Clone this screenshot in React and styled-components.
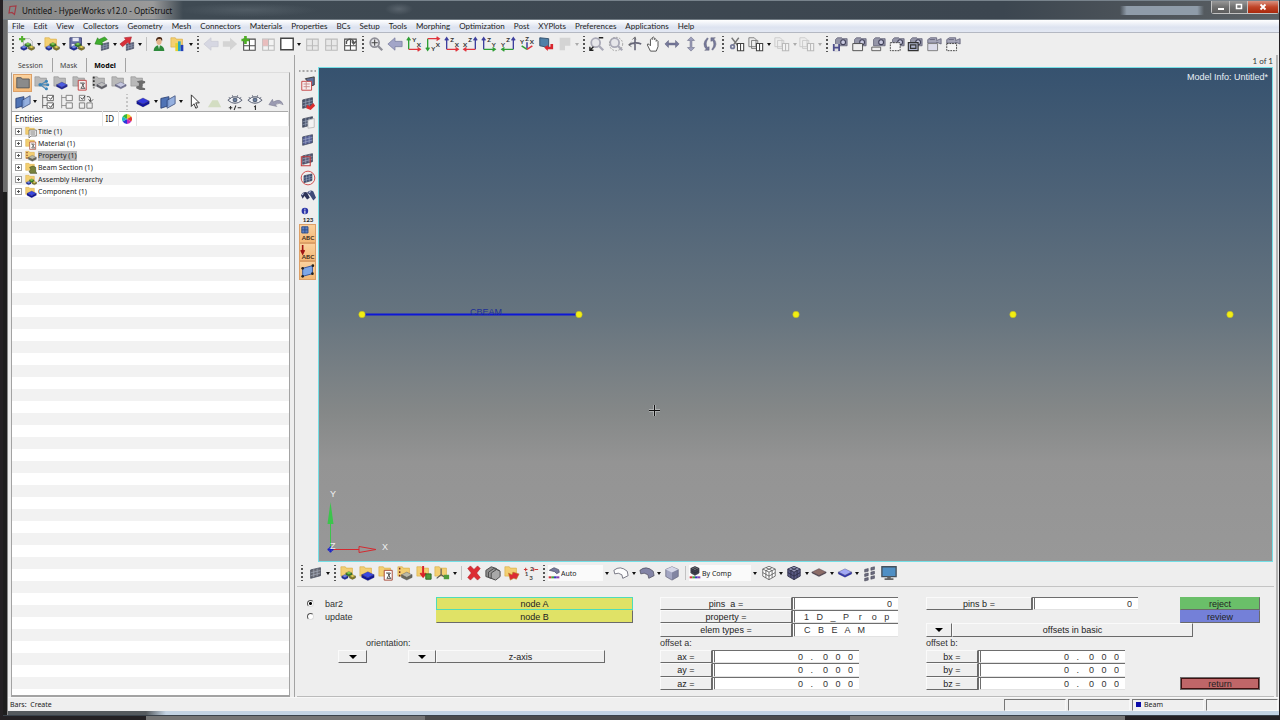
import styled, { createGlobalStyle, css } from 'styled-components';

const GlobalStyle = createGlobalStyle`
    :root {
        --ui: Lato, "Noto Sans", sans-serif;
        --ui-small: "Noto Sans", "Open Sans", sans-serif;
        --panel: "Liberation Sans", Arial, sans-serif;
        --face: #eeeeee;
        --line: #a3a3a3;
        --shadow: #6e6e6e;
        --text-xs: 7px;
        --text-sm: 8px;
        --text-md: 9px;
    }

    * {
        box-sizing: border-box;
    }

    body {
        margin: 0;
        font-family: var(--ui);
        font-size: var(--text-sm);
        color: #222;
    }

    button, input, select {
        margin: 0;
        padding: 0;
        border: 0;
        font: inherit;
        color: inherit;
        background: none;
    }
`;

const Desktop = styled.div`
    height: 100vh;
    display: flex;
    flex-direction: column;
    padding: 0 1px 4px 3px;
    background: linear-gradient(90deg, #242124 0 146px, #757575 146px 425px, #4b4b4b 425px 850px, #757575 850px 1125px, #242124 1125px);
`;

const Frame = styled.div`
    flex: 1;
    min-height: 0;
    display: flex;
    flex-direction: column;
    padding: 0 0 4px 5px;
    border-bottom: 1px solid #39424b;
    background:
        linear-gradient(#8a8a8a, #8a8a8a) 4px 0 / 1px 100% no-repeat,
        linear-gradient(#6e6e6e 0 192px, #1e1e1e 192px) 0 0 / 4px 100% no-repeat,
        linear-gradient(90deg, #555a5e 0 143px, #c3d3e3 163px);
`;

const TitleBar = styled.header`
    display: flex;
    align-items: center;
    height: 20px;
    margin-left: -5px;
    padding-left: 5px;
    border-top: 1px solid #78838c;
    border-bottom: 1px solid #707a82;
    background:
        linear-gradient(90deg, transparent, #8f9ca9 8%, #8f9ca9 92%, transparent) 1117px 5px / 84px 9px no-repeat,
        radial-gradient(ellipse 14px 6px at 396px 8px, #59636c, transparent),
        radial-gradient(ellipse 70px 7px at 245px 9px, #515c65, transparent),
        linear-gradient(90deg, #858585 0, #9a9a9a 150px, #3f4a53 180px, #3c4650 1000px, #4d545a 1140px, #5c6165);
`;

const AppTitle = styled.h1`
    flex: 1;
    display: flex;
    align-items: center;
    gap: 5px;
    margin: 0;
    font-family: var(--ui-small);
    font-size: var(--text-sm);
    font-weight: 400;
    color: #111;
`;

const WindowButtons = styled.div`
    display: flex;
    align-self: flex-start;
    height: 13px;
    border: 1px solid #c2c2c2;
    border-top: 0;
    border-radius: 0 0 3px 3px;
`;

const WindowButton = styled.button`
    display: grid;
    place-items: center;
    width: ${p => p.$close ? '30px' : '18px'};
    border-right: ${p => p.$close ? '0' : '1px solid #c2c2c2'};
    background: ${p => p.$close
        ? 'linear-gradient(#d9917f, #c04428 50%, #a8280c)'
        : 'linear-gradient(#999, #707070 50%, #5d5d5d)'};
`;

const MenuBar = styled.nav`
    display: flex;
    align-items: center;
    gap: 9px;
    height: 13px;
    padding-left: 4px;
    border-bottom: 1px solid #b4b8c2;
    background: linear-gradient(#fff, #dde3f0 60%, #e3e8f3);
`;

const MenuItem = styled.button`
    white-space: nowrap;
`;

const Toolbar = styled.div`
    display: flex;
    align-items: center;
    height: 22px;
    padding-left: 1px;
    background: var(--face);
`;

/* Buttons share the width of their group, the drop arrows stay narrow. */
const ToolGroup = styled.div`
    display: flex;
    align-items: center;
    width: ${p => p.$width}px;
    height: 18px;
`;

const Grip = styled.span`
    flex: none;
    width: 8px;
    height: 16px;
    background: radial-gradient(circle, #222 1px, transparent 1px) center / 8px 4px;
    opacity: ${p => p.$faint ? 0.2 : 0.75};
`;

const SpacedGrip = styled(Grip)`
    margin: 0 2px 0 28px;
`;

const Divider = styled.span`
    flex: none;
    width: 1px;
    height: 14px;
    margin: 0 3px;
    background: #c2c2c2;
`;

const Tool = styled.button`
    flex: 1;
    min-width: 0;
    height: 18px;
    display: grid;
    place-items: center;
    opacity: ${p => p.$dim ? 0.3 : 1};
    ${p => p.$active && css`
        box-shadow: inset 0 0 0 1px #dda067;
        background: linear-gradient(#fbd3a0, #f4b774);
    `}

    svg {
        width: 16px;
        height: 16px;
        display: block;
        overflow: visible;
    }
`;

const DropButton = styled.button`
    flex: none;
    width: 6px;
    height: 16px;
    display: grid;
    place-items: center;
    opacity: ${p => p.$dim ? 0.3 : 1};

    &::after {
        content: "";
        border: 2px solid transparent;
        border-top: 3px solid #111;
        border-bottom: 0;
    }
`;

const Body = styled.div`
    flex: 1;
    min-height: 0;
    display: flex;
    background: var(--face);
`;

const Sidebar = styled.aside`
    flex: none;
    width: 287px;
    display: flex;
    flex-direction: column;
    padding: 0 4px 0 3px;
    border-right: 1px solid var(--line);
    font-family: var(--ui-small);
    font-size: var(--text-xs);
`;

const Tabs = styled.div`
    display: flex;
    align-items: flex-end;
    height: 17px;
`;

const Tab = styled.button`
    height: 14px;
    padding: 0 9px 0 7px;
    border-right: 1px solid var(--line);
    font-weight: ${p => p.$active ? 700 : 400};
    color: ${p => p.$active ? '#000' : '#444'};
`;

const SidePanel = styled.div`
    flex: 1;
    min-height: 0;
    display: flex;
    flex-direction: column;
    border: 1px solid var(--line);
    border-top-color: #ddd;
    border-bottom-width: 2px;
`;

const SideTools = styled.div`
    display: flex;
    align-items: center;
    height: 19px;
    padding-left: 1px;
`;

const EntityList = styled.div`
    flex: 1;
    overflow: hidden;
    background: repeating-linear-gradient(#f2f2f2 0 12px, #fff 12px 24px) 0 14px;
`;

const EntityTable = styled.table`
    width: 100%;
    table-layout: fixed;
    border-collapse: collapse;

    th, td {
        padding: 0;
        text-align: left;
        font-weight: 400;
        vertical-align: middle;
    }

    th {
        height: 14px;
        padding-left: 3px;
        border-right: 1px solid #e4e4e4;
        border-top: 1px solid #aaa;
        background: #fff;
        font-family: var(--ui-small);
        font-size: var(--text-sm);
    }

    th svg {
        display: block;
    }

    td {
        height: 12px;
    }
`;

const Entity = styled.div`
    display: flex;
    align-items: center;
    height: 12px;
    padding-left: 3px;
    white-space: nowrap;

    svg {
        width: 12px;
        height: 12px;
        margin: 0 1px 0 3px;
    }
`;

const Expander = styled.button`
    width: 7px;
    height: 7px;
    border: 1px solid #999;
    background: linear-gradient(#555, #555) center / 3px 1px no-repeat, linear-gradient(#555, #555) center / 1px 3px no-repeat, #fff;
`;

const EntityName = styled.span`
    line-height: 10px;
    background: ${p => p.$selected ? '#b9b9b9' : 'transparent'};
`;

const Main = styled.main`
    flex: 1;
    min-width: 0;
    display: flex;
    flex-direction: column;
    padding: 0 2px 0 2px;
    margin-right: 1px;
    border-right: 2px solid #b5b5b5;
`;

const Stage = styled.div`
    flex: 1;
    min-height: 0;
    display: flex;
    padding-right: 1px;
`;

const SideRail = styled.div`
    flex: none;
    width: 21px;
    padding: 12px 2px 0 2px;
`;

const RailGrip = styled.div`
    height: 8px;
    background: radial-gradient(circle, #222 1px, transparent 1px) center / 4px 7px;
    opacity: 0.7;
`;

const Rail = styled.div`
    height: 205px;
    display: flex;
    flex-direction: column;

    ${Tool} {
        width: 17px;
        height: auto;
        min-height: 0;
    }
`;

const Page = styled.div`
    flex: 1;
    min-width: 0;
    display: flex;
    flex-direction: column;
`;

const PageCount = styled.div`
    height: 12px;
    line-height: 13px;
    text-align: right;
    color: #333;
`;

const Viewport = styled.div`
    flex: 1;
    min-height: 0;
    position: relative;
    border: 1px solid #74dfe6;
    background: linear-gradient(#36526f, #4d6277 25%, #66747f 50%, #858888 70%, #949494 80%, #989898);

    svg {
        display: block;
        width: 100%;
        height: 100%;
    }
`;

const ModelInfo = styled.div`
    position: absolute;
    top: 4px;
    right: 4px;
    font-family: var(--panel);
    font-size: var(--text-md);
    color: #e8f0f6;
`;

const Combo = styled.select`
    appearance: none;
    height: 16px;
    width: ${p => p.$width}px;
    padding-left: 1px;
    background: #fafafa;
    font-family: var(--ui-small);
    font-size: var(--text-xs);
`;

const ComboIcon = styled.span`
    display: grid;
    width: 12px;
    height: 16px;
    place-items: center;
    background: #fafafa;

    svg {
        width: 12px;
        height: 14px;
    }
`;

const ComboArrow = styled(DropButton)`
    width: 8px;
`;

const CommandPanel = styled.form`
    display: grid;
    grid-template-columns: 362fr 266fr 254fr 80px;
    margin-top: 2px;
    padding: 10px 14px 6px 1px;
    border-top: 1px solid #c4c4c4;
    border-bottom: 1px solid #bbb;
    font-family: var(--panel);
    font-size: var(--text-md);
    color: #333;
`;

const Column = styled.div`
    display: grid;
    grid-template-rows: repeat(2, 13px 13px 14px) 13px;
`;

const Line = styled.div`
    display: flex;
    align-items: stretch;
    min-width: 0;
    grid-row: ${p => p.$row};
    padding-left: ${p => p.$indent || 0}px;
    line-height: 12px;
`;

const Bevel = styled.button`
    flex: none;
    width: ${p => p.$width}px;
    border: 1px solid;
    border-color: ${p => p.$focus ? '#4fdcb8' : `${p.$tone || '#fafafa'} #6a6a6a #6a6a6a ${p.$tone || '#fafafa'}`};
    background: ${p => p.$tone || '#efefef'};
    line-height: 10px;
    color: #222;
    ${p => p.$default && css`
        border-color: #6a6a6a;
        box-shadow: inset 0 0 0 1px #401010;
    `}
`;

const ArrowBevel = styled(Bevel)`
    display: grid;
    place-items: center;

    &::after {
        content: "";
        border: 4px solid transparent;
        border-top-color: #000;
        border-bottom: 0;
    }
`;

const Field = styled.input`
    flex: none;
    width: ${p => p.$width}px;
    padding: ${p => p.$text ? '0 0 0 9px' : '0 6px 0 0'};
    border-left: 3px double var(--shadow);
    border-top: 1px solid var(--shadow);
    border-bottom: 1px solid #e2e2e2;
    background: #fff;
    text-align: ${p => p.$text ? 'left' : 'right'};
    color: #333;
`;

const Choice = styled.label`
    flex: none;
    width: 129px;
    display: flex;
    align-items: center;
    gap: 11px;
`;

const Radio = styled.input`
    appearance: none;
    width: 7px;
    height: 7px;
    border: 1px solid;
    border-color: #555 #ddd #ddd #555;
    border-radius: 50%;
    background: #fff;

    &:checked {
        background: radial-gradient(circle, #000 1px, #fff 2px);
    }
`;

const Spacer = styled.span`
    width: 41px;
`;

const StatusBar = styled.footer`
    display: flex;
    align-items: center;
    gap: 2px;
    height: 14px;
    padding: 0 1px 0 2px;
    background: #efefef;
    border-top: 1px solid #f8f8f8;
    font-family: var(--ui-small);
    font-size: var(--text-xs);
`;

const StatusText = styled.span`
    flex: 1;
`;

const StatusCell = styled.span`
    display: flex;
    align-items: center;
    gap: 3px;
    width: ${p => p.$width}px;
    height: 12px;
    padding-left: 3px;
    border: 1px solid;
    border-color: #777 #f8f8f8 #f8f8f8 #777;
`;

const Swatch = styled.i`
    width: 5px;
    height: 5px;
    background: #0a0aa8;
`;

/* ---- icon parts, drawn on an 18 x 18 field ---- */

const Box = ({ x = 9, y = 12, w = 5, top = '#4d5be0', side = '#1a1f9c', h = 3 }) => (
    <g stroke="#1c1c3a" strokeWidth=".3">
        <path d={`M${x - w} ${y}l${w} ${-w / 2}l${w} ${w / 2}l${-w} ${w / 2}z`} fill={top} />
        <path d={`M${x - w} ${y}v${h}l${w} ${w / 2}l${w} ${-w / 2}v${-h}l${-w} ${w / 2}z`} fill={side} />
    </g>
);

const Folder = ({ grey }) => (
    <path d="M1 2h5l1 1.500h7v9H1z" fill={grey ? '#b9b9b9' : '#f3cf72'} stroke={grey ? '#929292' : '#d9ab42'} strokeWidth=".7" />
);

const Blocks = () => (
    <>
        <Box x={10} y={9} w={3.500} h={2} top="#7fd44c" side="#2f8c1d" />
        <Box x={5.500} y={12.500} w={3.500} h={2} top="#6d84f0" side="#1c2ea8" />
        <Box x={14} y={12.500} w={3.500} h={2} top="#e0cf4e" side="#8a7f1c" />
    </>
);

const Sheet = ({ fill = '#fff' }) => (
    <path d="M3 3.500h13v12.500H3zM9.500 3.500v12.500M3 11h13" fill={fill} stroke="#4a4a4a" strokeWidth="1.200" />
);

const Panel = ({ fill = '#6f7f9c' }) => (
    <>
        <path d="M3 5.500l11-2.500v9l-11 3z" fill={fill} stroke="#333a4c" strokeWidth=".8" />
        <path d="M6.500 4.700v9.300M10.300 4v9M3 8.800l11-2.700M3 12l11-2.900" stroke="#c4cede" strokeWidth=".5" fill="none" />
    </>
);

const Camera = () => (
    <>
        <path d="M4 4l2-2h5l1 1h5v8H4z" fill="#9596a8" stroke="#56566c" strokeWidth=".8" />
        <circle cx="12.500" cy="7" r="2.700" fill="#c9cae0" stroke="#404058" strokeWidth="1.200" />
    </>
);

const MovieCamera = () => (
    <path d="M2 8V4l3-2h7v3l5-2v6l-5-2v1zM4 4h6" fill="#a6a6b8" stroke="#5d5d74" strokeWidth=".9" />
);

const Mesh3d = ({ top, side, line }) => (
    <>
        <path d="M9 1.500l7 3v8l-7 4-7-4v-8z" fill={side} />
        <path d="M9 1.500l7 3-7 3.500-7-3.500z" fill={top} />
        <path d="M9 1.500l7 3v8l-7 4-7-4v-8zM2 4.500l7 3.500 7-3.500M9 8v8.500M2 8.500l7 4 7-4M5.500 3l7 3.300v8.200M12.500 3l-7 3.300v8.200" fill="none" stroke={line} strokeWidth=".9" />
    </>
);

const Cube = ({ colour = '#a3a6c2' }) => (
    <>
        <path d="M9 2l7 3v8l-7 4-7-4V5z" fill={colour} stroke="#55556e" strokeWidth=".7" />
        <path d="M9 2l7 3-7 3.500L2 5z" fill="#d5d7e8" />
        <path d="M9 8.500V17l7-4V5z" fill="#6d6f8c" opacity=".6" />
    </>
);

/* One corner view: two axes from the same origin, each with its letter. */
const Axes = ({ up, across, upColour, acrossColour, right, down }) => {
    const x = right ? 15 : 3;
    const y = down ? 3 : 15;
    const ex = right ? 2 : 16;
    const ey = down ? 16 : 2;
    const sx = right ? 1 : -1;
    const sy = down ? -1 : 1;
    return (
        <>
            <path d={`M${x} ${y}V${ey}m-2 ${3 * sy}L${x} ${ey}l2 ${3 * sy}`} fill="none" stroke={upColour} strokeWidth="1.500" />
            <path d={`M${x} ${y}H${ex}m${3 * sx} -2L${ex} ${y}l${3 * sx} 2`} fill="none" stroke={acrossColour} strokeWidth="1.500" />
            <text x="7" y={down ? 17 : 7} fontSize="7" fontWeight="700" fill="#333">{up}</text>
            <text x={right ? 1 : 12} y="12" fontSize="7" fontWeight="700" fill="#333">{across}</text>
        </>
    );
};

const Eye = () => (
    <>
        <path d="M1 7q8-8 16 0q-8 7-16 0M2 4l2 1M6 1.500l1 2M12 1.500l-1 2M16 4l-2 1" fill="#eef0f5" stroke="#5a6073" strokeWidth="1.100" />
        <circle cx="9" cy="6.700" r="2.200" fill="#6a7fa0" stroke="#333c50" strokeWidth=".8" />
    </>
);

const Pin = ({ colour = '#8f8fa2' }) => (
    <path d="M1 6q7-6 15 1l1 5-6 3-1-4q-4-3-8-1z" fill={colour} stroke="#4a4a5c" strokeWidth=".8" />
);

const Lens = ({ colour = '#a9a9b7' }) => (
    <>
        <circle cx="7.500" cy="7.500" r="5" fill="#e6e6ea" stroke={colour} strokeWidth="2" />
        <path d="M11 11l5 5" stroke={colour} strokeWidth="2.600" />
    </>
);

const ColourStrip = () => (
    <>
        <path d="M1 14h4v3H1z" fill="#d4343c" />
        <path d="M5 14h4v3H5z" fill="#3f9e3f" />
        <path d="M9 14h4v3H9z" fill="#3838c0" />
        <path d="M13 14h4v3h-4z" fill="#8b3fb0" />
    </>
);

const red = '#e0343c';
const green = '#2f9e35';
const blue = '#3d3f9e';

const art = {
    newModel: <><path d="M5 3h7l3 3v8H5z" fill="#f0f0f0" stroke="#999" strokeWidth=".7" /><path d="M3.500 0v7M0 3.500h7" stroke="#55b030" strokeWidth="2.300" /><Blocks /></>,
    openModel: <><Folder /><Blocks /></>,
    saveModel: <><path d="M1 2h13v12H1z" fill="#6970a8" stroke="#3a3f70" /><path d="M4 2h7v4H4zM3 9h9v5H3z" fill="#e8e9f4" /><Blocks /></>,
    importData: <><g transform="translate(6 5) scale(.75)"><Panel fill="#59607c" /></g><path d="M12 1l3 3-6 3 1 3-9-1 3-7 1.500 2z" fill="#3fae2e" stroke="#227716" strokeWidth=".6" /></>,
    exportData: <><g transform="translate(6 5) scale(.75)"><Panel fill="#59607c" /></g><path d="M1 9l3 3 6-5 2 2 2-8-8 1 1.500 2z" fill="#d9303a" stroke="#a31c26" strokeWidth=".6" /></>,
    user: <><path d="M3 17q0-6 6-7q6 1 6 7z" fill="#2e8a3c" /><ellipse cx="9" cy="6" rx="3" ry="4" fill="#e3b48d" /><path d="M5.500 6q0-5 4-5q4 0 3 5l-1.500-2.500H8z" fill="#4a2a18" /><path d="M8 10h2l-1 5z" fill="#fff" /></>,
    folderBars: <><Folder /><path d="M6 17V8h3v9z" fill="#e3d22d" /><path d="M9 17V6h3v11z" fill="#28a8c0" /><path d="M12 17v-7h3v7z" fill="#2440b8" /></>,
    back: <path d="M1 9l8-7v4h8v6H9v4z" fill="#a2a5c8" stroke="#777a9c" strokeWidth=".8" />,
    forward: <path d="M17 9L9 2v4H1v6h8v4z" fill="#999" />,
    addPage: <><Sheet /><path d="M5 0v9M.5 4.500h9" stroke="#4dad25" strokeWidth="3" /></>,
    deletePage: <><Sheet /><path d="M3 4h6v7H3z" fill="#e05050" /></>,
    layout: <path d="M2 2.500h14v13H2z" fill="#fff" stroke="#444" strokeWidth="1.600" />,
    sheet: <Sheet fill="#ddd" />,
    pageSwap: <><Sheet /><path d="M5 9V6q4-5 8 0v2M11 6l2 3 3-3" fill="none" stroke="#555" strokeWidth="1.600" /></>,
    fit: <><Lens colour="#8f8f98" /><path d="M7.500 4v7M4 7.500h7" stroke="#444" strokeWidth="1.200" /></>,
    viewXY: <Axes up="Y" across="X" upColour={green} acrossColour={red} />,
    viewXYDown: <Axes up="Y" across="X" upColour={green} acrossColour={red} down />,
    viewZX: <Axes up="Z" across="X" upColour={blue} acrossColour={red} />,
    viewXZ: <Axes up="Z" across="X" upColour={blue} acrossColour={red} right />,
    viewZY: <Axes up="Z" across="Y" upColour={blue} acrossColour={green} />,
    viewYZ: <Axes up="Z" across="Y" upColour={blue} acrossColour={green} right />,
    viewIso: <><path d="M9 14V7" stroke={blue} strokeWidth="1.700" /><path d="M9 15l-6-4" stroke={green} strokeWidth="1.700" /><path d="M9 15l6-4" stroke={red} strokeWidth="1.700" /><g fontSize="7" fontWeight="700" fill="#333"><text x="7" y="6">Z</text><text x="1" y="9">Y</text><text x="12" y="9">X</text></g></>,
    viewBack: <><path d="M2 2l10 1v10l-10-2z" fill="#5080a8" stroke="#2d4a68" /><path d="M7 13l4-3v2h3v-3h3v6h-6v2z" fill="#d8262e" /></>,
    viewSaved: <path d="M3 2h12v9H9v5H3z" fill="#999" />,
    zoom: <><Lens /><path d="M11 2h5M1 16l4-4M1 12v4h4" stroke="#222" strokeWidth="1.500" fill="none" /></>,
    zoomCircle: <><Lens /><circle cx="9" cy="9" r="7.500" fill="none" stroke="#999" strokeDasharray="2 1.500" /></>,
    rotate: <><path d="M9 2v14M2 10q7-4 14-1" fill="none" stroke="#666678" strokeWidth="1.800" /><path d="M6 4l3-3 1 3M5 7l-3 3 3 2" fill="none" stroke="#666" /></>,
    hand: <path d="M5 17L1.500 10q0-2 2-.5l1.500 1.500V4q1-2 2 0V2q1-2 2.300 0v2q1-2 2.200 0v2q1-2 2 0v6l-2 5z" fill="#fff" stroke="#555" strokeWidth="1.100" />,
    panH: <path d="M1 9l4-4v3h8V5l4 4-4 4v-3H5v3z" fill="#777a9c" stroke="#60627c" strokeWidth=".6" />,
    panV: <path d="M9 1l4 4h-3v8h3l-4 4-4-4h3V5H5z" fill="#9ea0bd" stroke="#60627c" strokeWidth=".6" />,
    spin: <path d="M6 2q-7 7-1 13l-2 1h5v-4l-2 1q-3-5 1-10zM12 16q7-7 1-13l2-1h-5v4l2-1q3 5-1 10z" fill="#777a9c" stroke="#55576e" strokeWidth=".5" />,
    cut: <><path d="M3 2l7 9M11 2L5 10" stroke="#777" strokeWidth="1.600" /><circle cx="4" cy="12" r="2" fill="none" stroke="#777b99" strokeWidth="2" /><path d="M9.500 8.500h7v8h-7zM13 9v7" fill="#fff" stroke="#444" strokeWidth="1.200" /></>,
    copy: <><path d="M1 2h6l2 2v8H1zM4 5h7v9H4z" fill="#eee" stroke="#777" /><path d="M9.500 8.500h7v8h-7zM13 9v7" fill="#fff" stroke="#444" strokeWidth="1.200" /></>,
    camSave: <><Camera /><path d="M1 9h8v8H1z" fill="#4e4f8c" /><path d="M3 9h4v3H3zM3 14h4v3H3z" fill="#ddd" /></>,
    camWindow: <><Camera /><path d="M2 8.500h11v8H2z" fill="#eee" stroke="#444" /></>,
    camBar: <><Camera /><path d="M2 12.500h10v4H2z" fill="#eee" stroke="#555" /></>,
    camArea: <><Camera /><path d="M1.500 7.500h11v9h-11z" fill="#f5f5f5" stroke="#333" strokeDasharray="2 1" /></>,
    camPage: <><Camera /><path d="M1.500 7.500h11v9h-11zM4 10h6v4H4z" fill="#aeb4ce" stroke="#333" strokeWidth="1.300" /></>,
    movie: <><MovieCamera /><path d="M2 8.500h11v8H2z" fill="#dcdcea" stroke="#777" /></>,
    movieArea: <><MovieCamera /><path d="M2 8.500h11v8H2z" fill="#f5f5f5" stroke="#333" strokeDasharray="2 1" /></>,

    folderGrey: <path d="M2 3h5l1 1.500h8v10H2z" fill="#8b8b8b" stroke="#575757" />,
    shareGrey: <><Folder grey /><path d="M14 7L7 11l7 5M7 11h9" stroke="#4888b8" strokeWidth="1.200" fill="none" /><g fill="#3a84b8"><circle cx="7" cy="11" r="2" /><circle cx="14" cy="7" r="1.700" /><circle cx="15.500" cy="11" r="1.700" /><circle cx="14" cy="15.500" r="1.700" /></g></>,
    boxGrey: <><Folder grey /><Box x={10} y={11} w={6} h={2} /></>,
    matGrey: <><Folder grey /><path d="M7 6h9v11H7z" fill="#f5eeee" stroke="#c03636" /><path d="M9 9h5l-4 6h5M11 9l3 6" stroke="#555" fill="none" /></>,
    propGrey: <><Folder grey /><path d="M2 2v13" stroke="#333" strokeDasharray="2 2" strokeWidth="2" /><Box x={11} y={11} w={5.500} h={2} top="#bdbdbd" side="#666" /></>,
    meshGrey: <><Folder grey /><Box x={11} y={11} w={6} h={1.500} top="#c5c7df" side="#7c7ea0" /></>,
    beamGrey: <><Folder grey /><path d="M8 7l5-1 4 1v2l-3 1v4l3 1v2h-6l-4-2v-2l3-1v-3l-2-1z" fill="#6c6c6c" /></>,
    planes: <><path d="M1 5l9-2v10l-9 3z" fill="#4f73b5" stroke="#2c4174" /><path d="M8 7l9-5v9l-9 5z" fill="#86a6dd" stroke="#2c4174" opacity=".85" /></>,
    treeOn: <><path d="M3 1v15M3 4h5M3 13h5" stroke="#666" fill="none" /><path d="M8 1.500h7v6H8zM8 10h7v6H8z" fill="#fff" stroke="#555" /><path d="M10 4l2 2 3-4M10 13l2 2 3-4" fill="none" stroke="#333" /></>,
    treeOff: <><path d="M3 1v15M3 4h5M3 13h5" stroke="#888" fill="none" /><path d="M8 1.500h7v6H8zM8 10h7v6H8z" fill="#f4f4f4" stroke="#777" /></>,
    treeSwap: <><path d="M1.500 1.500h6v6h-6zM1.500 10h6v6h-6zM10 10h6v6h-6z" fill="#eee" stroke="#777" /><path d="M3 4l2 2 3-4" stroke="#333" fill="none" /><path d="M10 3q5-1 4 5M12 6l2 3 3-3" stroke="#444" fill="none" /></>,
    block: <Box x={9} y={8} w={7} h={3} top="#3438dd" side="#1114a0" />,
    pointer: <path d="M6 1v13l3-3 2 5 2-1-2-5h4z" fill="#fff" stroke="#222" />,
    ghost: <path d="M1 15l5-8h6l4 8z" fill="#98b85e" />,
    eyePlus: <><Eye /><path d="M2 15.500h4M4 13.500v4M10 13l-2 5M12 15.500h4" stroke="#333" strokeWidth="1.200" /></>,
    eyeOne: <><Eye /><path d="M8 14.500l1.500-1V18" fill="none" stroke="#333" strokeWidth="1.300" /></>,
    undo: <path d="M1 12l4-6 1 3q8-5 11 3q-4-3-9 0l2 2z" fill="#9b9bb2" stroke="#77778c" strokeWidth=".6" />,

    title: <><Folder /><path d="M6 6h11v9H9l-3 3z" fill="#f4f4f4" stroke="#555" /><path d="M8 9h7M8 12h7" stroke="#444" /></>,
    material: <><Folder /><path d="M7 6h9v11H7z" fill="#fff" stroke="#a03b28" /><path d="M9 9h5l-4 6h5M11 9l3 6" stroke="#444" fill="none" /></>,
    property: <><Folder /><path d="M3 3v12" stroke="#7a2a22" strokeDasharray="2 2" strokeWidth="1.600" /><Box x={11} y={11} w={6} h={3} top="#b9b9a6" side="#6b6b5a" /></>,
    beam: <><Folder /><path d="M7 8l5-2 4 2v7l2 2H8l-2-3 3-2z" fill="#78823c" stroke="#4c5426" /></>,
    assembly: <><Folder /><Blocks /></>,
    component: <><Folder /><Box x={10} y={11} w={7} h={3} top="#3b48e0" side="#10149c" /></>,

    railCards: <><path d="M6 3l10-2v9l-3 1z" fill="#5f6f9a" stroke="#333" /><path d="M2 6h11v10H2z" fill="#f7eeee" stroke="#c23b3b" /><path d="M4 9h7M4 12h7M7 6v9" stroke="#c98a8a" /></>,
    railRed: <><Panel fill="#4c566e" /><path d="M8 11l3 2 4-4 2 3-5 5-5-2z" fill="#dc2e2e" /></>,
    railHalf: <><Panel fill="#4c566e" /><path d="M9 7l7-2v10l-7 1z" fill="#f2f2f2" stroke="#bbb" /></>,
    railMesh: <Panel fill="#565f96" />,
    railBox: <><Panel fill="#5c5c78" /><path d="M1.500 6.500h10v10h-10z" fill="none" stroke="#c23b3b" strokeWidth="1.200" /></>,
    railCircle: <><g transform="translate(2 2) scale(.82)"><Panel fill="#3f5278" /></g><circle cx="9" cy="9" r="7.700" fill="none" stroke="#d05050" strokeWidth="1.100" /></>,
    binoculars: <><path d="M1 8q3-5 7-3l3 6-3 2-3-4-2 3z" fill="#2d3358" /><path d="M8 5q4-4 7-1l3 7-3 3-4-6z" fill="#3f4a78" /><path d="M2 8l2-2M10 5l2-1" stroke="#c5cde8" strokeWidth="1.400" /></>,
    info123: <><circle cx="5.500" cy="4.500" r="3.700" fill="#2b35a8" /><path d="M5.500 4V7.500M5.500 2v1" stroke="#fff" strokeWidth="1.200" /><text x="3" y="17" fontSize="7" fontWeight="700" fill="#222">123</text></>,
    abcMesh: <><path d="M2 2h7v7H2zM5.500 2v7M2 5.500h7" fill="#5f80c2" stroke="#2b4a86" /><text x="2" y="17" fontSize="7" fontWeight="700" fill="#3a2a1a">ABC</text></>,
    abcForce: <><path d="M3 1v9M1 7l2 4 2-4" stroke="#a01414" strokeWidth="1.800" fill="none" /><text x="2" y="17" fontSize="7" fontWeight="700" fill="#3a2a1a">ABC</text></>,
    quad: <><path d="M3 6l11-3v9l-11 3z" fill="#7fa8e8" stroke="#2d4f9a" /><g fill="#222"><circle cx="3" cy="6" r="1.500" /><circle cx="14.500" cy="3" r="1.500" /><circle cx="14" cy="12" r="1.500" /><circle cx="3" cy="15" r="1.500" /></g></>,

    meshDark: <Panel fill="#6b6d76" />,
    load: <><Folder /><path d="M8 1v11M5 9l3 4 3-4" stroke="#d8222a" strokeWidth="2.200" fill="none" /><path d="M11 10h6v6h-6z" fill="#4f9b3d" stroke="#2c6420" /></>,
    system: <><Folder /><path d="M8 4v7l-5 4M8 11l6 4" stroke="#555" strokeWidth="1.300" fill="none" /><path d="M11 11h6v5h-6z" fill="#4f9b3d" /></>,
    remove: <path d="M2 4l3-3 4 4 4-4 3 3-4 5 4 5-3 3-4-4-4 4-3-3 4-5z" fill="#dc2c34" stroke="#a81820" strokeWidth=".6" />,
    cards: <><path d="M1 6l6-4 6 2v6l-6 5-6-2z" fill="#8c8c8c" stroke="#444" /><path d="M4 8l6-4 6 2v6l-5 4-7-2z" fill="#9a9a9a" stroke="#444" /><path d="M7 9l6-4 4 2v6l-5 4-5-2z" fill="#a9a9a9" stroke="#444" /></>,
    organize: <><Folder /><path d="M5 9l4 2 1-3 7 2-3 6-3-1-4 2z" fill="#dc2c34" stroke="#b38b20" strokeWidth=".6" /></>,
    renumber: <><g fontSize="7" fontWeight="700" fill="#444"><text x="8" y="7">2</text><text x="7" y="17">3</text><text x="2" y="12">1</text></g><path d="M1 5h4M3 3v4M13 5h4M12 3v4" stroke="#cc3a3a" strokeWidth="1.200" /></>,
    topoAuto: <><path d="M2 5l7-4 7 3 1 4-4 2-3-3z" fill="#777a9c" stroke="#44465c" /><ColourStrip /></>,
    surfaceWire: <Pin colour="#fdfdfd" />,
    surfaceShade: <Pin colour="#8384a6" />,
    cube: <Cube />,
    compColour: <><g transform="translate(1 -2) scale(.88)"><Mesh3d top="#77777f" side="#47475a" line="#26262e" /></g><ColourStrip /></>,
    wireCube: <Mesh3d top="#fff" side="#fff" line="#555" />,
    solidCube: <Mesh3d top="#9c9cbd" side="#5b5b85" line="#2b2b42" />,
    plateBrown: <Box x={9} y={8} w={8} h={1} top="#8d6d68" side="#5b4542" />,
    plateBlue: <Box x={9} y={8} w={7.500} h={2} top="#a2a8f4" side="#3438b8" />,
    shrink: <g fill="#6c6c80" stroke="#3c3c4c" strokeWidth=".6"><path d="M3 5l4-1v3l-4 1zM10 3l4-1v3l-4 1zM3 10l4-1v3l-4 1zM10 8l4-1v3l-4 1zM3 15l4-1v3l-4 1zM10 13l4-1v3l-4 1z" /></g>,
    monitor: <><path d="M1 2h16v11H1z" fill="#4f8fc4" stroke="#44505c" strokeWidth="1.500" /><path d="M7 13h4v2h3v2H4v-2h3z" fill="#666" /></>,
};

const Icon = ({ name }) => <svg viewBox="0 0 18 18" aria-hidden="true">{art[name]}</svg>;

/* Tools are listed as strings: "+" adds a drop arrow, "~" greys it out, "*" marks it pressed, "|" is a divider. */
const renderTools = items => items.map((item, i) => {
    if (item === '|') return <Divider key={i} />;
    const dim = item.startsWith('~');
    const name = item.replace(/[~+*]/g, '');
    const tool = <Tool key={i} type="button" aria-label={name} $dim={dim} $active={item.includes('*')}><Icon name={name} /></Tool>;
    return item.endsWith('+') ? [tool, <DropButton key={`${i}-drop`} type="button" aria-label={`${name} options`} $dim={dim} />] : tool;
});

const menus = ['File', 'Edit', 'View', 'Collectors', 'Geometry', 'Mesh', 'Connectors', 'Materials', 'Properties', 'BCs', 'Setup', 'Tools', 'Morphing', 'Optimization', 'Post', 'XYPlots', 'Preferences', 'Applications', 'Help'];

const toolGroups = [
    { width: 185, items: ['newModel+', 'openModel+', 'saveModel+', 'importData+', 'exportData+', '|', 'user', 'folderBars+'] },
    { width: 165, items: ['~back', '~forward', 'addPage', '~deletePage', 'layout+', '~sheet', '~sheet', 'pageSwap'] },
    { width: 221, items: ['fit', 'back', 'viewXY', 'viewXYDown', 'viewZX', 'viewXZ', 'viewZY', 'viewYZ', 'viewIso', 'viewBack', '~viewSaved+'] },
    { width: 139, items: ['zoom', 'zoomCircle', 'rotate', 'hand', 'panH', 'panV', 'spin'] },
    { width: 104, items: ['cut', 'copy+', '~copy+', '~copy+'] },
    { width: 139, items: ['camSave', 'camWindow', 'camBar', 'camArea', 'camPage', 'movie', 'movieArea'] },
];

const railTools = ['railCards', 'railRed', 'railHalf', 'railMesh', 'railBox', 'railCircle', 'binoculars', 'info123', '*abcMesh', '*abcForce', '*quad'];

const entities = [
    { icon: 'title', name: 'Title (1)' },
    { icon: 'material', name: 'Material (1)' },
    { icon: 'property', name: 'Property (1)', selected: true },
    { icon: 'beam', name: 'Beam Section (1)' },
    { icon: 'assembly', name: 'Assembly Hierarchy' },
    { icon: 'component', name: 'Component (1)' },
];

const nodes = [43, 260, 477, 694, 911];

function Browser() {
    return (
        <Sidebar>
            <Tabs role="tablist">
                <Tab role="tab">Session</Tab>
                <Tab role="tab">Mask</Tab>
                <Tab role="tab" aria-selected="true" $active>Model</Tab>
            </Tabs>
            <SidePanel>
                <SideTools>
                    <ToolGroup $width={135}>
                        {renderTools(['*folderGrey', 'shareGrey', 'boxGrey', 'matGrey', 'propGrey', 'meshGrey', 'beamGrey'])}
                    </ToolGroup>
                </SideTools>
                <SideTools>
                    <ToolGroup $width={82}>{renderTools(['planes+', 'treeOn', 'treeOff', 'treeSwap'])}</ToolGroup>
                    <SpacedGrip $faint />
                    <ToolGroup $width={51}>{renderTools(['block+', 'planes+'])}</ToolGroup>
                    <ToolGroup $width={102}>{renderTools(['pointer', '~ghost', 'eyePlus', 'eyeOne', 'undo'])}</ToolGroup>
                </SideTools>
                <EntityList>
                    <EntityTable>
                        <colgroup>
                            <col width="90" />
                            <col width="16" />
                            <col width="18" />
                            <col />
                        </colgroup>
                        <thead>
                            <tr>
                                <th>Entities</th>
                                <th>ID</th>
                                <th aria-label="Color">
                                    <svg width="10" height="10" viewBox="0 0 10 10">
                                        <path d="M5 5V0a5 5 0 0 1 4.300 2.500z" fill="#e8d42c" />
                                        <path d="M5 5l4.300-2.500a5 5 0 0 1 0 5z" fill="#e23a30" />
                                        <path d="M5 5l4.300 2.500A5 5 0 0 1 5 10z" fill="#c22cc2" />
                                        <path d="M5 5v5A5 5 0 0 1 .7 7.500z" fill="#2c36d8" />
                                        <path d="M5 5L.7 7.500a5 5 0 0 1 0-5z" fill="#22b8c8" />
                                        <path d="M5 5L.7 2.500A5 5 0 0 1 5 0z" fill="#38b838" />
                                    </svg>
                                </th>
                                <th />
                            </tr>
                        </thead>
                        <tbody>
                            {entities.map(e => (
                                <tr key={e.name}>
                                    <td colSpan="4">
                                        <Entity>
                                            <Expander aria-label={`Expand ${e.name}`} />
                                            <Icon name={e.icon} />
                                            <EntityName $selected={e.selected}>{e.name}</EntityName>
                                        </Entity>
                                    </td>
                                </tr>
                            ))}
                        </tbody>
                    </EntityTable>
                </EntityList>
            </SidePanel>
        </Sidebar>
    );
}

function Scene() {
    return (
        <Viewport>
            <svg viewBox="0 0 953 493" preserveAspectRatio="none">
                <path d="M43 246.500h217" stroke="#0d17d6" strokeWidth="2" />
                <text x="151" y="247" fontFamily="Liberation Sans, sans-serif" fontSize="9" fill="#1c2f96">CBEAM</text>
                {nodes.map(x => <circle key={x} cx={x} cy="246.500" r="3.200" fill="#f2ee12" stroke="#b9b52a" strokeWidth=".6" />)}
                <path d="M330 342.500h11M335.500 337v11" stroke="#f2f2f2" strokeWidth="2.500" opacity=".5" />
                <path d="M330 342.500h11M335.500 337v11" stroke="#111" />
                <path d="M11.500 481V450" stroke="#3cc44c" />
                <path d="M11.500 434l-3 22h6z" fill="#3cc44c" />
                <path d="M13 481.500h27M40 478.500l17 3-17 3z" stroke="#d42a30" fill="none" />
                <path d="M8.500 481.500h6M11.500 478.500v6" stroke="#1c24c8" strokeWidth="1.500" />
                <circle cx="11.500" cy="481.500" r="2" fill="none" stroke="#1c24c8" />
                <g fontFamily="Liberation Sans, sans-serif" fontSize="9" fill="#f0f0f0">
                    <text x="11" y="429">Y</text>
                    <text x="63" y="482">X</text>
                    <text x="11" y="481">Z</text>
                </g>
            </svg>
            <ModelInfo>Model Info: Untitled*</ModelInfo>
        </Viewport>
    );
}

function ViewToolbar() {
    return (
        <Toolbar>
            <Grip />
            <ToolGroup $width={25}>{renderTools(['meshDark+'])}</ToolGroup>
            <Grip />
            <ToolGroup $width={201}>
                {renderTools(['assembly', 'component', 'material', 'property', 'load', 'system+', '|', 'remove', 'cards', 'organize', 'renumber'])}
            </ToolGroup>
            <Grip />
            <ComboIcon><Icon name="topoAuto" /></ComboIcon>
            <Combo $width={43} aria-label="Element color mode"><option>Auto</option></Combo>
            <ComboArrow type="button" aria-label="Color mode list" />
            <ToolGroup $width={71}>{renderTools(['surfaceWire+', 'surfaceShade+', 'cube'])}</ToolGroup>
            <Divider />
            <ComboIcon><Icon name="compColour" /></ComboIcon>
            <Combo $width={50} aria-label="Color by"><option>By Comp</option></Combo>
            <ComboArrow type="button" aria-label="Color by list" />
            <ToolGroup $width={140}>{renderTools(['wireCube+', 'solidCube+', 'plateBrown+', 'plateBlue+', 'shrink', 'monitor'])}</ToolGroup>
        </Toolbar>
    );
}

function ValueLine({ id, row, label, buttonWidth, fieldWidth, value, text }) {
    return (
        <Line $row={row}>
            <Bevel type="button" id={id} $width={buttonWidth}>{label}</Bevel>
            <Field aria-labelledby={id} $width={fieldWidth} $text={text} defaultValue={value} />
        </Line>
    );
}

const zero = '0   .    0   0   0';

function BarsPanel() {
    return (
        <CommandPanel>
            <Column>
                <Line $row={1} $indent={9}>
                    <Choice><Radio type="radio" name="mode" defaultChecked />bar2</Choice>
                    <Bevel type="button" $width={197} $tone="#e0e266" $focus>node A</Bevel>
                </Line>
                <Line $row={2} $indent={9}>
                    <Choice><Radio type="radio" name="mode" />update</Choice>
                    <Bevel type="button" $width={197} $tone="#e0e266">node B</Bevel>
                </Line>
                <Line $row={4} $indent={68}>orientation:</Line>
                <Line $row={5} $indent={40}>
                    <ArrowBevel type="button" aria-label="orientation mode" $width={29} />
                    <Spacer />
                    <ArrowBevel type="button" aria-label="orientation axis" $width={28} />
                    <Bevel type="button" $width={169}>z-axis</Bevel>
                </Line>
            </Column>
            <Column>
                <ValueLine id="pins-a" row={1} label={'pins\u00a0 a ='} buttonWidth={132} fieldWidth={106} value="0" />
                <ValueLine id="property" row={2} label="property =" buttonWidth={132} fieldWidth={106} value="1   D   _   P    r    o   p" text />
                <ValueLine id="elem-types" row={3} label="elem types =" buttonWidth={132} fieldWidth={106} value="C   B   E   A   M" text />
                <Line $row={4}>offset a:</Line>
                <ValueLine id="ax" row={5} label="ax =" buttonWidth={52} fieldWidth={147} value={zero} />
                <ValueLine id="ay" row={6} label="ay =" buttonWidth={52} fieldWidth={147} value={zero} />
                <ValueLine id="az" row={7} label="az =" buttonWidth={52} fieldWidth={147} value={zero} />
            </Column>
            <Column>
                <ValueLine id="pins-b" row={1} label="pins b =" buttonWidth={106} fieldWidth={106} value="0" />
                <Line $row={3}>
                    <ArrowBevel type="button" aria-label="offset mode" $width={26} />
                    <Bevel type="button" $width={241}>offsets in basic</Bevel>
                </Line>
                <Line $row={4}>offset b:</Line>
                <ValueLine id="bx" row={5} label="bx =" buttonWidth={52} fieldWidth={147} value={zero} />
                <ValueLine id="by" row={6} label="by =" buttonWidth={52} fieldWidth={147} value={zero} />
                <ValueLine id="bz" row={7} label="bz =" buttonWidth={52} fieldWidth={147} value={zero} />
            </Column>
            <Column>
                <Line $row={1}><Bevel type="button" $width={80} $tone="#6abf69">reject</Bevel></Line>
                <Line $row={2}><Bevel type="button" $width={80} $tone="#7480d8">review</Bevel></Line>
                <Line $row={7}><Bevel type="button" $width={80} $tone="#bf6668" $default>return</Bevel></Line>
            </Column>
        </CommandPanel>
    );
}

function App() {
    return (
        <Desktop>
            <GlobalStyle />
            <Frame>
                <TitleBar>
                    <AppTitle>
                        <svg width="9" height="11" viewBox="0 0 9 11"><path d="M2 1.500L8 1 6.500 9.500 4 7.500 1 8z" fill="none" stroke="#a33a44" strokeWidth="1.200" /></svg>
                        Untitled - HyperWorks v12.0 - OptiStruct
                    </AppTitle>
                    <WindowButtons>
                        <WindowButton aria-label="Minimize"><svg width="8" height="8"><path d="M1 5h6v2H1z" fill="#fff" /></svg></WindowButton>
                        <WindowButton aria-label="Maximize"><svg width="8" height="8"><path d="M1.500 1.500h5v4h-5z" fill="none" stroke="#fff" strokeWidth="1.500" /></svg></WindowButton>
                        <WindowButton aria-label="Close" $close><svg width="8" height="8"><path d="M1.500 1.500l5 5M6.500 1.500l-5 5" stroke="#fff" strokeWidth="1.800" /></svg></WindowButton>
                    </WindowButtons>
                </TitleBar>
                <MenuBar>
                    {menus.map(m => <MenuItem key={m}>{m}</MenuItem>)}
                </MenuBar>
                <Toolbar>
                    {toolGroups.map((g, i) => (
                        <ToolGroup key={i} $width={g.width}>
                            <Grip />
                            {renderTools(g.items)}
                        </ToolGroup>
                    ))}
                </Toolbar>
                <Body>
                    <Browser />
                    <Main>
                        <Stage>
                            <SideRail>
                                <RailGrip />
                                <Rail>{renderTools(railTools)}</Rail>
                            </SideRail>
                            <Page>
                                <PageCount>1 of 1</PageCount>
                                <Scene />
                            </Page>
                        </Stage>
                        <ViewToolbar />
                        <BarsPanel />
                    </Main>
                </Body>
                <StatusBar>
                    <StatusText>Bars:&nbsp; Create</StatusText>
                    <StatusCell $width={62} />
                    <StatusCell $width={62} />
                    <StatusCell $width={72}><Swatch />Beam</StatusCell>
                    <StatusCell $width={72} />
                </StatusBar>
            </Frame>
        </Desktop>
    );
}

export default App;
